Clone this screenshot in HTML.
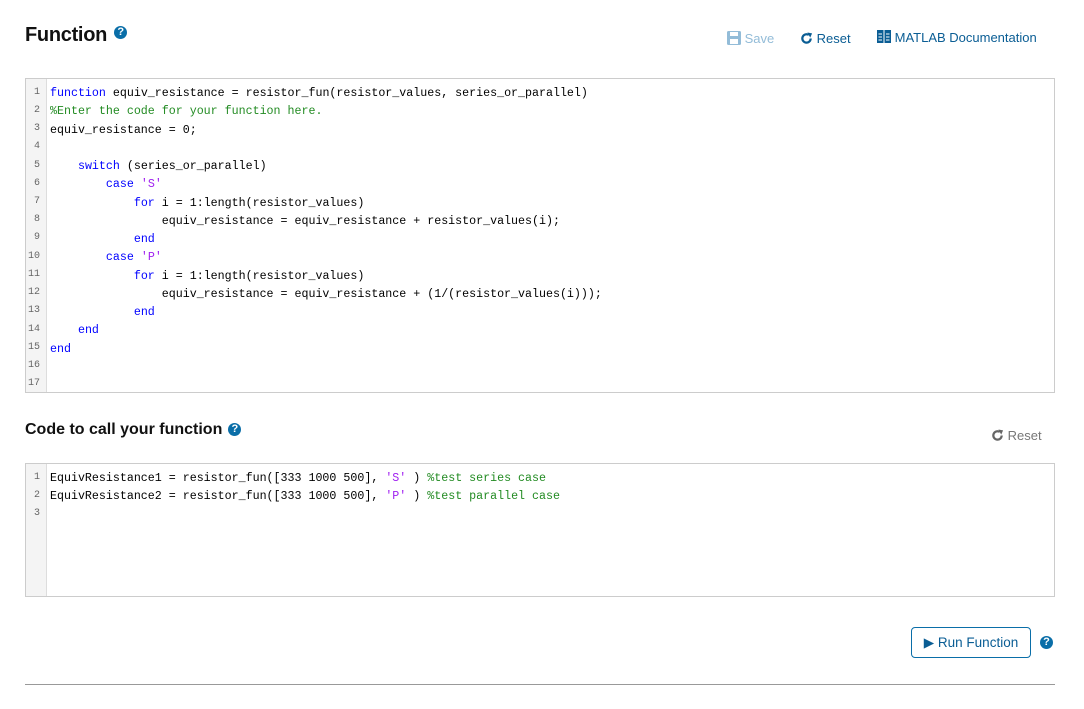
<!DOCTYPE html>
<html><head><meta charset="utf-8"><style>
body{margin:0;width:1084px;height:709px;background:#fff;font-family:"Liberation Sans",Arial,sans-serif;position:relative;overflow:hidden}
.abs{position:absolute}
h1{position:absolute;left:25px;top:24px;margin:0;font-size:20px;font-weight:bold;color:#111;letter-spacing:-0.3px}
h2{position:absolute;left:25px;top:421px;margin:0;font-size:16px;font-weight:bold;color:#111}
.q{display:inline-block;width:13px;height:13px;border-radius:50%;background:#0a6ea8;color:#fff;font-size:11px;font-weight:bold;text-align:center;line-height:13px;vertical-align:2px;margin-left:4px}
.ed{position:absolute;left:25px;width:1028px;border:1px solid #ccc;background:#fff}
.gut{position:absolute;left:0;top:0;bottom:0;width:20px;background:#f4f4f4;border-right:1px solid #ddd}
.ln{position:absolute;left:0;width:14px;text-align:right;font:10px "Liberation Mono",monospace;color:#666}
.cl{position:absolute;left:24px;font:11.65px "Liberation Mono",monospace;color:#000;white-space:pre}
.k{color:#0000ff}.s{color:#a020f0}.c{color:#228b22}
.lnk{position:absolute;font-size:13px;color:#0a6ea8}
</style></head><body>
<h1>Function<span class="q" style="vertical-align:6px;margin-left:7px">?</span></h1>
<div class="lnk" style="left:727px;top:31px;color:#93bcd8">
<svg width="14" height="14" viewBox="0 0 14 14" style="vertical-align:-2px"><rect x="0" y="0" width="14" height="14" rx="1.5" fill="#93bcd8"/><rect x="3" y="1" width="8" height="4" fill="#fff"/><rect x="3" y="8" width="8" height="5" fill="#fff"/></svg> Save</div>
<div class="lnk" style="left:800px;top:31px;color:#0a5d94">
<svg width="13" height="13" viewBox="0 0 14 14" style="vertical-align:-2px"><path d="M11.5 7A4.5 4.5 0 1 1 9.5 3.2" fill="none" stroke="#0a5d94" stroke-width="2.4"/><path d="M8 0.5L13 1.5L11 6Z" fill="#0a5d94"/></svg> Reset</div>
<div class="lnk" style="left:877px;top:30px;color:#0a5d94">
<svg width="14" height="13" viewBox="0 0 14 13" style="vertical-align:-1px"><rect x="0" y="0" width="6.5" height="13" fill="#0a5d94"/><rect x="7.5" y="0" width="6.5" height="13" fill="#0a5d94"/><path d="M1.5 4h3.5M1.5 7h3.5M1.5 10h3.5M9 4h3.5M9 7h3.5M9 10h3.5" stroke="#fff" stroke-width="1"/></svg> MATLAB Documentation</div>

<div class="ed" style="top:78px;height:313px">
<div class="gut"></div>
<div class="ln" style="top:8px">1</div><div class="ln" style="top:26px">2</div><div class="ln" style="top:44px">3</div><div class="ln" style="top:62px">4</div><div class="ln" style="top:81px">5</div><div class="ln" style="top:99px">6</div><div class="ln" style="top:117px">7</div><div class="ln" style="top:135px">8</div><div class="ln" style="top:153px">9</div><div class="ln" style="top:172px">10</div><div class="ln" style="top:190px">11</div><div class="ln" style="top:208px">12</div><div class="ln" style="top:226px">13</div><div class="ln" style="top:245px">14</div><div class="ln" style="top:263px">15</div><div class="ln" style="top:281px">16</div><div class="ln" style="top:299px">17</div>
<div class="cl" style="top:6px;line-height:18.25px"><span class="k">function</span> equiv_resistance = resistor_fun(resistor_values, series_or_parallel)
<span class="c">%Enter the code for your function here.</span>
equiv_resistance = 0;

    <span class="k">switch</span> (series_or_parallel)
        <span class="k">case</span> <span class="s">'S'</span>
            <span class="k">for</span> i = 1:length(resistor_values)
                equiv_resistance = equiv_resistance + resistor_values(i);
            <span class="k">end</span>
        <span class="k">case</span> <span class="s">'P'</span>
            <span class="k">for</span> i = 1:length(resistor_values)
                equiv_resistance = equiv_resistance + (1/(resistor_values(i)));
            <span class="k">end</span>
    <span class="k">end</span>
<span class="k">end</span></div>
</div>

<h2>Code to call your function<span class="q" style="vertical-align:2px;margin-left:6px">?</span></h2>
<div class="lnk" style="left:991px;top:428px;color:#777">
<svg width="13" height="13" viewBox="0 0 14 14" style="vertical-align:-2px"><path d="M11.5 7A4.5 4.5 0 1 1 9.5 3.2" fill="none" stroke="#666" stroke-width="2.4"/><path d="M8 0.5L13 1.5L11 6Z" fill="#666"/></svg> Reset</div>

<div class="ed" style="top:463px;height:132px">
<div class="gut"></div>
<div class="ln" style="top:8px">1</div><div class="ln" style="top:26px">2</div><div class="ln" style="top:44px">3</div>
<div class="cl" style="top:6px;line-height:18.25px">EquivResistance1 = resistor_fun([333 1000 500], <span class="s">'S'</span> ) <span class="c">%test series case</span>
EquivResistance2 = resistor_fun([333 1000 500], <span class="s">'P'</span> ) <span class="c">%test parallel case</span></div>
</div>

<div class="abs" style="left:911px;top:627px;width:118px;height:29px;border:1px solid #0a6ea8;border-radius:4px;color:#0a5d94;font-size:13.5px;line-height:29px;text-align:center">&#9654; Run Function</div>
<span class="q abs" style="left:1040px;top:636px;margin:0">?</span>
<div class="abs" style="left:25px;top:684px;width:1030px;height:1px;background:#999"></div>
</body></html>
